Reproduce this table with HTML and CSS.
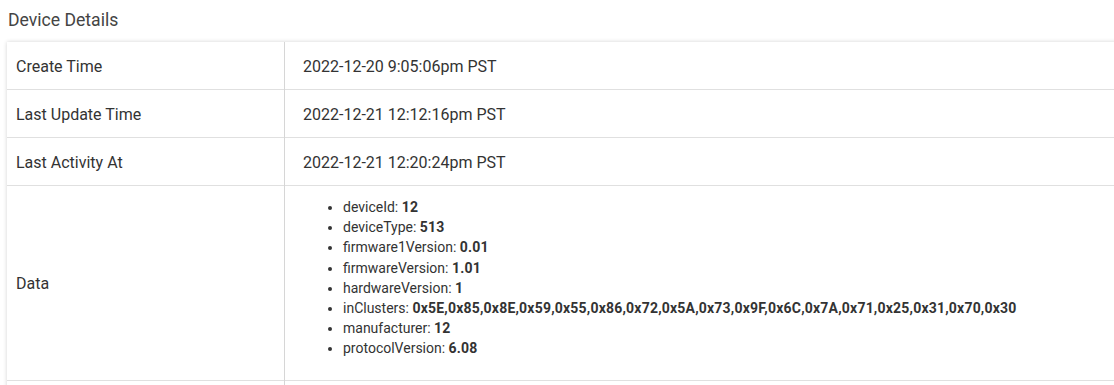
FILE: index.html
```html
<!DOCTYPE html>
<html>
<head>
<meta charset="utf-8">
<link rel="stylesheet" href="styles.css">
</head>
<body>
<div class="page">
  <h2 class="title">Device Details</h2>
  <div class="card">
    <table class="details">
      <tr><td class="label">Create Time</td><td class="value">2022-12-20 9:05:06pm PST</td></tr>
      <tr><td class="label">Last Update Time</td><td class="value">2022-12-21 12:12:16pm PST</td></tr>
      <tr><td class="label">Last Activity At</td><td class="value">2022-12-21 12:20:24pm PST</td></tr>
      <tr class="data-row"><td class="label">Data</td><td class="value">
        <ul class="data-list">
          <li>deviceId: <b>12</b></li>
          <li>deviceType: <b>513</b></li>
          <li>firmware1Version: <b>0.01</b></li>
          <li>firmwareVersion: <b>1.01</b></li>
          <li>hardwareVersion: <b>1</b></li>
          <li>inClusters: <b>0x5E,0x85,0x8E,0x59,0x55,0x86,0x72,0x5A,0x73,0x9F,0x6C,0x7A,0x71,0x25,0x31,0x70,0x30</b></li>
          <li>manufacturer: <b>12</b></li>
          <li>protocolVersion: <b>6.08</b></li>
        </ul>
      </td></tr>
      <tr class="tail"><td class="label"></td><td class="value"></td></tr>
    </table>
  </div>
</div>
</body>
</html>
```

FILE: styles.css
```css
html, body {
  margin: 0;
  padding: 0;
  background: #fff;
  overflow: hidden;
}
body {
  font-family: Roboto, "Liberation Sans", sans-serif;
  color: #333;
}
.page {
  padding: 9px 0 0 7px;
  width: 1250px;
}
.title {
  margin: 0 0 11px 1px;
  font-size: 17.6px;
  font-weight: 400;
  line-height: 22px;
  color: #444;
}
.card {
  background: #fff;
  box-shadow: 0 0 4px rgba(0,0,0,0.18);
}
.details {
  width: 100%;
  border-collapse: collapse;
  font-size: 16px;
}
.details td {
  border-top: 1px solid #e0e0e0;
  vertical-align: middle;
  height: 46px;
  padding: 1px 0 0 0;
}
.details tr:first-child td { border-top: none; }
.label {
  width: 268px;
  padding-left: 9px !important;
  border-right: 1px solid #d6d6d6;
}
.value {
  padding-left: 18px !important;
}
.data-list {
  margin: 10px 0 21px 0;
  padding-left: 40px;
  font-size: 14px;
  line-height: 20.2px;
}
.data-list b { font-weight: 700; letter-spacing: 0.2px; }
.tail td { height: 20px; }
```
